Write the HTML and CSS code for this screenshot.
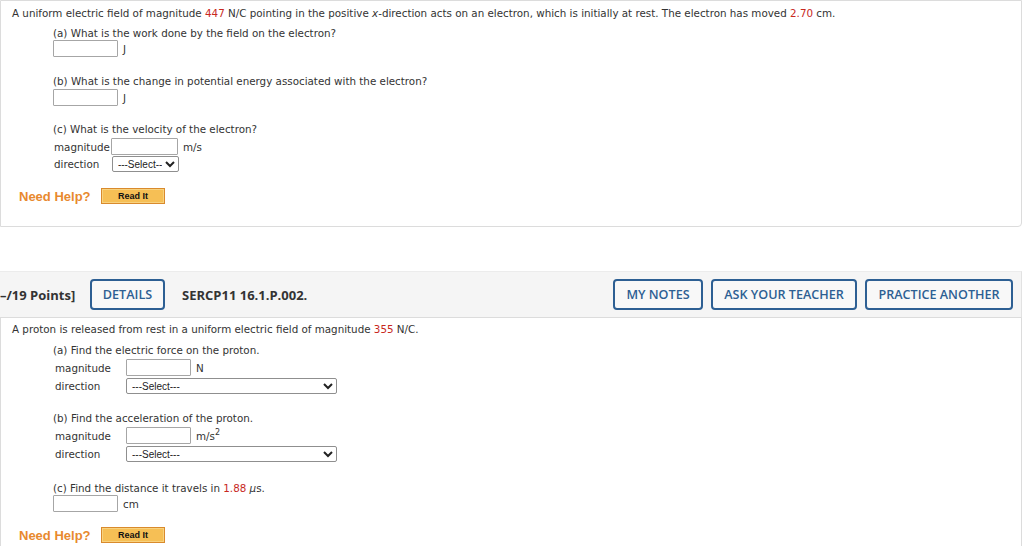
FILE: index.html
```html
<!DOCTYPE html>
<html>
<head>
<meta charset="utf-8">
<link rel="stylesheet" href="styles.css">
</head>
<body>
<div class="panel panel-first">
  <p class="intro">A uniform electric field of magnitude <span class="num">447</span> N/C pointing in the positive <i>x</i>-direction acts on an electron, which is initially at rest. The electron has moved <span class="num">2.70</span> cm.</p>
  <div class="part">
    <p class="label p1a">(a) What is the work done by the field on the electron?</p>
    <div class="answer"><span class="box"></span><span class="unit">J</span></div>
    <p class="label p1b">(b) What is the change in potential energy associated with the electron?</p>
    <div class="answer a1b"><span class="box"></span><span class="unit">J</span></div>
    <p class="label p1c">(c) What is the velocity of the electron?</p>
    <div class="grid grid-tight">
      <span class="rowlabel">magnitude</span><span class="cell"><span class="box"></span><span class="unit">m/s</span></span>
      <span class="rowlabel">direction</span><span class="cell"><select class="sel sel-small"><option>---Select---</option></select></span>
    </div>
  </div>
  <div class="help help1"><span class="need">Need Help?</span><span class="readit">Read It</span></div>
</div>

<div class="header">
  <div class="hleft">
    <span class="points">–/19 Points]</span>
    <span class="btn btn-details">DETAILS</span>
    <span class="code">SERCP11 16.1.P.002.</span>
  </div>
  <div class="hright">
    <span class="btn btn-notes">MY NOTES</span>
    <span class="btn btn-ask">ASK YOUR TEACHER</span>
    <span class="btn btn-practice">PRACTICE ANOTHER</span>
  </div>
</div>

<div class="panel panel-second">
  <p class="intro intro2">A proton is released from rest in a uniform electric field of magnitude <span class="num">355</span> N/C.</p>
  <div class="part">
    <p class="label p2a">(a) Find the electric force on the proton.</p>
    <div class="grid grid-wide">
      <span class="rowlabel">magnitude</span><span class="cell"><span class="box"></span><span class="unit">N</span></span>
      <span class="rowlabel">direction</span><span class="cell"><select class="sel sel-wide"><option>---Select---</option></select></span>
    </div>
    <p class="label p2b">(b) Find the acceleration of the proton.</p>
    <div class="grid grid-wide">
      <span class="rowlabel">magnitude</span><span class="cell"><span class="box"></span><span class="unit">m/s<sup>2</sup></span></span>
      <span class="rowlabel">direction</span><span class="cell"><select class="sel sel-wide"><option>---Select---</option></select></span>
    </div>
    <p class="label p2c">(c) Find the distance it travels in <span class="num">1.88</span> <i>μ</i>s.</p>
    <div class="answer a2c"><span class="box"></span><span class="unit">cm</span></div>
  </div>
  <div class="help help2"><span class="need">Need Help?</span><span class="readit">Read It</span></div>
</div>
</body>
</html>
```

FILE: styles.css
```css
* { box-sizing: border-box; }
html, body { margin: 0; padding: 0; background: #fff; }
body {
  font-family: "DejaVu Sans", Verdana, sans-serif;
  font-size: 10.33px;
  color: #333;
  width: 1024px;
  overflow: hidden;
}
p { margin: 0; }
.num { color: #c8281e; }

.panel {
  width: 1022px;
  border: 1px solid #dcdcdc;
  padding-left: 11px;
}
.panel-first {
  height: 227px;
  border-radius: 0 0 4px 0;
  padding-top: 4px;
}
.panel-second {
  border-top: none;
  border-bottom: none;
  height: 229px;
  padding-top: 4px;
}
.intro { line-height: 16px; }
.part { margin-left: 41px; }
.label { line-height: 14px; }
.p1a { margin-top: 5px; }
.p1b { margin-top: 17px; }
.p1c { margin-top: 16px; }
.a1b { margin-top: 1px; }

.answer { display: flex; align-items: center; height: 17px; }
.box {
  display: inline-block;
  width: 65px;
  height: 17px;
  border: 1px solid #a6a6a6;
  border-radius: 1px;
  background: #fff;
}
.unit { margin-left: 5px; line-height: 14px; }
.unit sup { font-size: 8px; line-height: 0; vertical-align: 5px; }

.grid { display: grid; align-items: center; }
.grid-tight {
  grid-template-columns: auto auto;
  justify-content: start;
  row-gap: 1px;
  margin-top: 2px;
}
.grid-tight .rowlabel { padding-left: 1px; padding-right: 1px; }
.grid-tight .box { width: 67px; height: 17px; }
.grid-wide {
  grid-template-columns: 73px auto;
  justify-content: start;
  row-gap: 2px;
  margin-top: 2px;
}
.grid-wide .rowlabel { padding-left: 2px; }
.cell { display: flex; align-items: center; }
.rowlabel { line-height: 14px; }

.sel {
  font-family: "Liberation Sans", Arial, sans-serif;
  font-size: 10px;
  height: 16px;
  padding: 0 0 0 1px;
  border: 1px solid #8f8f8f;
  border-radius: 2px;
  background: #fff;
  color: #222;
  margin: 0;
}
.sel-small { width: 67px; margin-left: 1px; }
.sel-wide { width: 211px; }

.help { display: flex; align-items: center; margin-left: 7px; }
.help1 { margin-top: 16px; }
.need {
  font-family: "Liberation Sans", Arial, sans-serif;
  font-weight: bold;
  font-size: 13px;
  color: #e8892e;
  width: 82px;
}
.readit {
  display: inline-block;
  width: 64px;
  height: 16px;
  border: 1px solid #d98a2c;
  box-shadow: inset 0 0 0 1px #f8d27e;
  background: #f6bf55;
  font-family: "Liberation Sans", Arial, sans-serif;
  font-weight: bold;
  font-size: 9px;
  line-height: 14px;
  text-align: center;
  color: #111;
}

.header {
  margin-top: 44px;
  width: 1022px;
  height: 47px;
  background: #f5f5f5;
  border-top: 1px solid #ececec;
  border-right: 1px solid #e2e2e2;
  border-bottom: 1px solid #dcdcdc;
  display: flex;
  align-items: center;
  justify-content: space-between;
  padding-right: 8px;
  font-family: "Open Sans", sans-serif;
  font-size: 12.6px;
}
.hleft, .hright { display: flex; align-items: center; }
.hright { gap: 8px; }
.points { font-weight: bold; color: #333; width: 90px; font-size: 13px; }
.code { font-weight: bold; color: #333; margin-left: 17px; font-size: 13px; }
.btn {
  display: inline-flex;
  align-items: center;
  justify-content: center;
  height: 31px;
  padding: 0;
  border: 2px solid #2d5f93;
  border-radius: 4px;
  color: #2d5f93;
  font-weight: 600;
  background: #f8f8f8;
}
.btn-details { width: 75px; }
.btn-notes { width: 90px; }
.btn-ask { width: 146px; }
.btn-practice { width: 148px; }

.intro2 { line-height: 14px; margin-top: 0; }
.p2a { margin-top: 7px; }
.p2b { margin-top: 17px; }
.p2c { margin-top: 19px; }
.a2c { margin-top: 0; }
.help2 { margin-top: 15px; }
```
